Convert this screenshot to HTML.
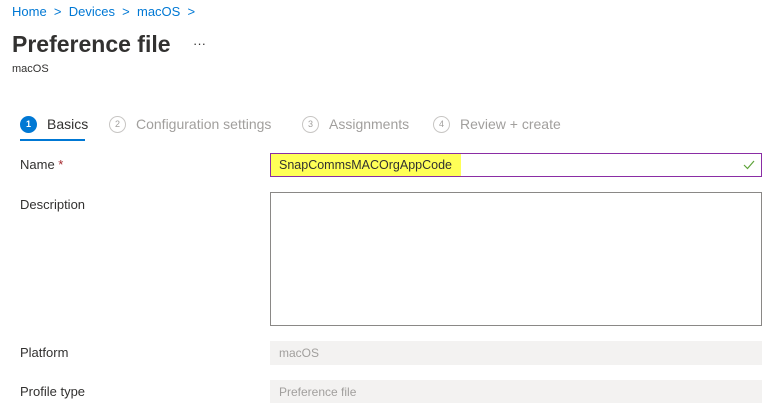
<!DOCTYPE html>
<html><head><style>
body{margin:0;width:764px;height:403px;background:#fff;font-family:"Liberation Sans",sans-serif;position:relative;overflow:hidden;color:#323130}
.a{position:absolute;white-space:nowrap}
.bc{top:4px;font-size:13px;color:#0078d4}
.circ{position:absolute;width:15px;height:15px;border:1px solid #c8c6c4;border-radius:50%;font-size:9px;color:#a19f9d;text-align:center;line-height:15px}
.st{font-size:14px;color:#a19f9d;top:116px}
.lbl{font-size:13px;left:20px;color:#323130}
.box{position:absolute;left:270px;width:490px;box-sizing:border-box}
</style></head><body>
<div class="a bc" style="left:12px">Home &nbsp;&gt;&nbsp; Devices &nbsp;&gt;&nbsp; macOS &nbsp;&gt;</div>
<div class="a" style="left:12px;top:31px;font-size:23px;font-weight:bold;color:#323130">Preference file</div>
<div class="a" style="left:193px;top:36px;font-size:13px">···</div>
<div class="a" style="left:12px;top:63px;font-size:11px">macOS</div>

<div class="circ" style="left:20px;top:116px;background:#0078d4;border-color:#0078d4;color:#fff;font-weight:bold">1</div>
<div class="a st" style="left:47px;color:#323130">Basics</div>
<div class="a" style="left:20px;top:139px;width:65px;height:2px;background:#0078d4"></div>
<div class="circ" style="left:109px;top:116px">2</div>
<div class="a st" style="left:136px">Configuration settings</div>
<div class="circ" style="left:302px;top:116px">3</div>
<div class="a st" style="left:329px">Assignments</div>
<div class="circ" style="left:433px;top:116px">4</div>
<div class="a st" style="left:460px">Review + create</div>

<div class="a lbl" style="top:157px">Name <span style="color:#a4262c">*</span></div>
<div class="box" style="top:153px;height:24px;border:1px solid #8a2da5;width:492px">
<div style="position:absolute;left:0;top:0;width:190px;height:22px;background:#ffff57"></div>
<div class="a" style="left:8px;top:4px;font-size:12.5px;color:#323130">SnapCommsMACOrgAppCode</div>
<svg style="position:absolute;right:6px;top:6px" width="12" height="10"><path d="M1 5 L4.5 8.5 L11 1" stroke="#5ea33a" stroke-width="1.2" fill="none"/></svg>
</div>

<div class="a lbl" style="top:197px">Description</div>
<div class="box" style="top:192px;height:134px;border:1px solid #8a8886;width:492px"></div>

<div class="a lbl" style="top:345px">Platform</div>
<div class="box" style="top:341px;height:24px;background:#f3f2f1;width:492px"><div class="a" style="left:9px;top:5px;font-size:12px;color:#a19f9d">macOS</div></div>
<div class="a lbl" style="top:384px">Profile type</div>
<div class="box" style="top:380px;height:23px;background:#f3f2f1;width:492px"><div class="a" style="left:9px;top:5px;font-size:12px;color:#a19f9d">Preference file</div></div>
</body></html>
